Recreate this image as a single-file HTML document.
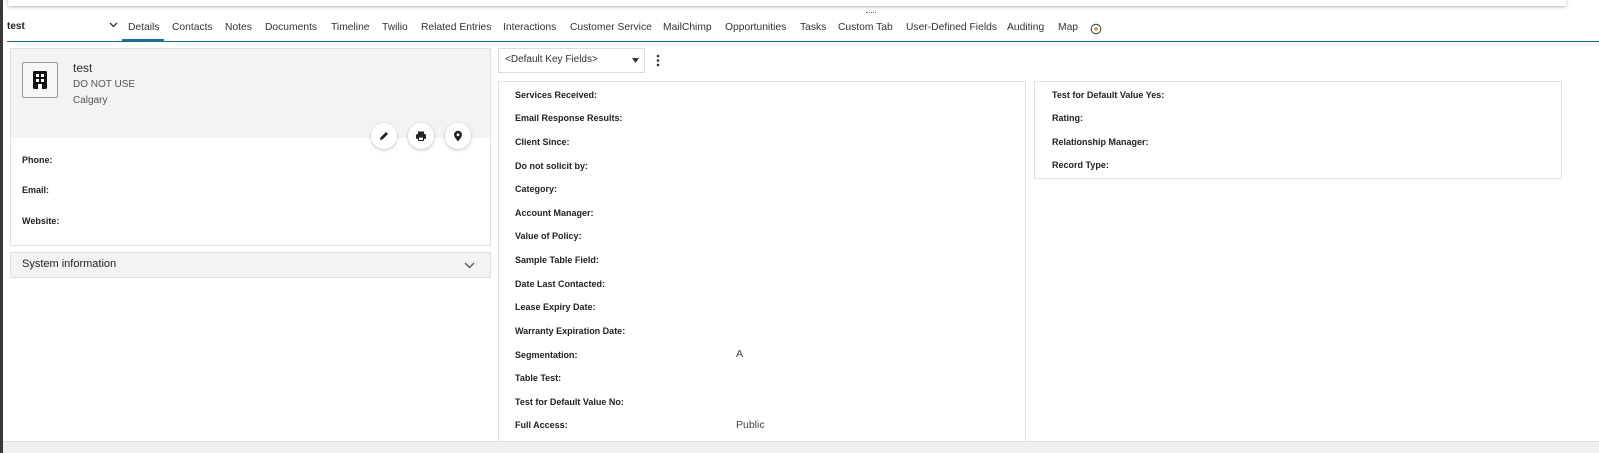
<!DOCTYPE html>
<html><head><meta charset="utf-8"><style>
*{margin:0;padding:0;box-sizing:border-box}
body{width:1599px;height:453px;overflow:hidden;background:#fff;font-family:"Liberation Sans",sans-serif;color:#222;position:relative}
.a{position:absolute;white-space:nowrap}
.tab{position:absolute;top:22px;font-size:10.3px;color:#333}
.lbl{position:absolute;font-size:9px;font-weight:bold;color:#222}
.val{position:absolute;font-size:10.5px;color:#444}
.btn{position:absolute;width:26px;height:26px;border-radius:50%;background:#fff;box-shadow:0 1px 3px rgba(0,0,0,.25);top:123px}
.btn svg{position:absolute;left:7px;top:7px}
</style></head><body>
<div class="a" style="left:0;top:0;width:3px;height:453px;background:#3a3a3a"></div>
<div class="a" style="left:8px;top:-4px;width:1558px;height:10px;background:#fff;box-shadow:0 1px 3px rgba(0,0,0,.3)"></div>
<div class="a" style="left:866px;top:12px;width:10px;height:2px;border-top:1px dotted #666"></div>

<div class="a" style="left:7px;top:21px;font-size:10px;font-weight:bold">test</div>
<svg class="a" style="left:109px;top:22px" width="9" height="6"><path d="M1 1L4.5 4.5L8 1" fill="none" stroke="#333" stroke-width="1.3"/></svg>
<div class="tab" style="left:128px">Details</div>
<div class="tab" style="left:172px">Contacts</div>
<div class="tab" style="left:225px">Notes</div>
<div class="tab" style="left:265px">Documents</div>
<div class="tab" style="left:331px">Timeline</div>
<div class="tab" style="left:382px">Twilio</div>
<div class="tab" style="left:421px">Related Entries</div>
<div class="tab" style="left:503px">Interactions</div>
<div class="tab" style="left:570px">Customer Service</div>
<div class="tab" style="left:663px">MailChimp</div>
<div class="tab" style="left:725px">Opportunities</div>
<div class="tab" style="left:800px">Tasks</div>
<div class="tab" style="left:838px">Custom Tab</div>
<div class="tab" style="left:906px">User-Defined Fields</div>
<div class="tab" style="left:1007px">Auditing</div>
<div class="tab" style="left:1058px">Map</div>
<svg class="a" style="left:1090px;top:23px" width="12" height="12"><circle cx="6" cy="6" r="4.8" fill="none" stroke="#444" stroke-width="1"/><circle cx="6" cy="6" r="1.6" fill="#c80"/></svg>
<div class="a" style="left:7px;top:41px;width:1592px;height:1px;background:#1b6f8f"></div>
<div class="a" style="left:122px;top:39px;width:42px;height:3px;background:#1b6f8f"></div>

<!-- left card -->
<div class="a" style="left:10px;top:48px;width:481px;height:198px;border:1px solid #e0e0e0;background:#fff"></div>
<div class="a" style="left:11px;top:49px;width:479px;height:89px;background:#f3f3f3"></div>
<div class="a" style="left:22px;top:62px;width:36px;height:36px;border:1px solid #999;border-radius:2px;background:#f7f7f7"></div>
<svg class="a" style="left:32px;top:70px" width="16" height="20"><rect x="1" y="1" width="14" height="18" rx="1.5" fill="#111"/><rect x="4" y="4" width="3" height="3" fill="#fff"/><rect x="9" y="4" width="3" height="3" fill="#fff"/><rect x="4" y="9" width="3" height="3" fill="#fff"/><rect x="9" y="9" width="3" height="3" fill="#fff"/><rect x="6" y="14" width="4" height="5" fill="#fff"/></svg>
<div class="a" style="left:73px;top:61px;font-size:12px;color:#333">test</div>
<div class="a" style="left:73px;top:79px;font-size:10px;color:#555">DO NOT USE</div>
<div class="a" style="left:73px;top:95px;font-size:10px;color:#555">Calgary</div>
<div class="btn" style="left:371px"><svg width="12" height="12"><path d="M2 10L2.5 7.5L8 2L10 4L4.5 9.5Z" fill="#222"/></svg></div>
<div class="btn" style="left:408px"><svg width="12" height="12"><rect x="3" y="1.5" width="6" height="2.5" fill="#222"/><rect x="1" y="4" width="10" height="5" rx="1.5" fill="#222"/><rect x="3.5" y="7" width="5" height="3.5" fill="#fff" stroke="#222"/></svg></div>
<div class="btn" style="left:445px"><svg width="12" height="12"><path d="M6 11.5C6 11.5 2 7 2 4.8A4 4 0 0 1 10 4.8C10 7 6 11.5 6 11.5Z" fill="#222"/><circle cx="6" cy="4.8" r="1.4" fill="#fff"/></svg></div>
<div class="lbl" style="left:22px;top:155px">Phone:</div>
<div class="lbl" style="left:22px;top:185px">Email:</div>
<div class="lbl" style="left:22px;top:216px">Website:</div>

<div class="a" style="left:10px;top:252px;width:481px;height:26px;border:1px solid #e0e0e0;background:#f3f3f3"></div>
<div class="a" style="left:22px;top:258px;font-size:11px;color:#222">System information</div>
<svg class="a" style="left:464px;top:262px" width="11" height="7"><path d="M1 1L5.5 5.5L10 1" fill="none" stroke="#555" stroke-width="1.3"/></svg>

<!-- dropdown -->
<div class="a" style="left:498px;top:48px;width:147px;height:25px;border:1px solid #ddd;background:#fff"></div>
<div class="a" style="left:505px;top:54px;font-size:10px;color:#333">&lt;Default Key Fields&gt;</div>
<svg class="a" style="left:632px;top:58px" width="7" height="5"><path d="M0 0H7L3.5 5Z" fill="#333"/></svg>
<svg class="a" style="left:656px;top:54px" width="4" height="13"><circle cx="2" cy="2" r="1.3" fill="#333"/><circle cx="2" cy="6.5" r="1.3" fill="#333"/><circle cx="2" cy="11" r="1.3" fill="#333"/></svg>

<!-- middle card -->
<div class="a" style="left:498px;top:81px;width:528px;height:360px;border:1px solid #e0e0e0;border-bottom:none"></div>
<div class="lbl" style="left:515px;top:90px">Services Received:</div>
<div class="lbl" style="left:515px;top:113px">Email Response Results:</div>
<div class="lbl" style="left:515px;top:137px">Client Since:</div>
<div class="lbl" style="left:515px;top:161px">Do not solicit by:</div>
<div class="lbl" style="left:515px;top:184px">Category:</div>
<div class="lbl" style="left:515px;top:208px">Account Manager:</div>
<div class="lbl" style="left:515px;top:231px">Value of Policy:</div>
<div class="lbl" style="left:515px;top:255px">Sample Table Field:</div>
<div class="lbl" style="left:515px;top:279px">Date Last Contacted:</div>
<div class="lbl" style="left:515px;top:302px">Lease Expiry Date:</div>
<div class="lbl" style="left:515px;top:326px">Warranty Expiration Date:</div>
<div class="lbl" style="left:515px;top:350px">Segmentation:</div>
<div class="val" style="left:736px;top:348px">A</div>
<div class="lbl" style="left:515px;top:373px">Table Test:</div>
<div class="lbl" style="left:515px;top:397px">Test for Default Value No:</div>
<div class="lbl" style="left:515px;top:420px">Full Access:</div>
<div class="val" style="left:736px;top:419px">Public</div>

<!-- right card -->
<div class="a" style="left:1034px;top:81px;width:528px;height:98px;border:1px solid #e0e0e0"></div>
<div class="lbl" style="left:1052px;top:90px">Test for Default Value Yes:</div>
<div class="lbl" style="left:1052px;top:113px">Rating:</div>
<div class="lbl" style="left:1052px;top:137px">Relationship Manager:</div>
<div class="lbl" style="left:1052px;top:160px">Record Type:</div>

<div class="a" style="left:3px;top:441px;width:1596px;height:12px;background:#f0f0f0;border-top:1px solid #ddd"></div>
</body></html>
